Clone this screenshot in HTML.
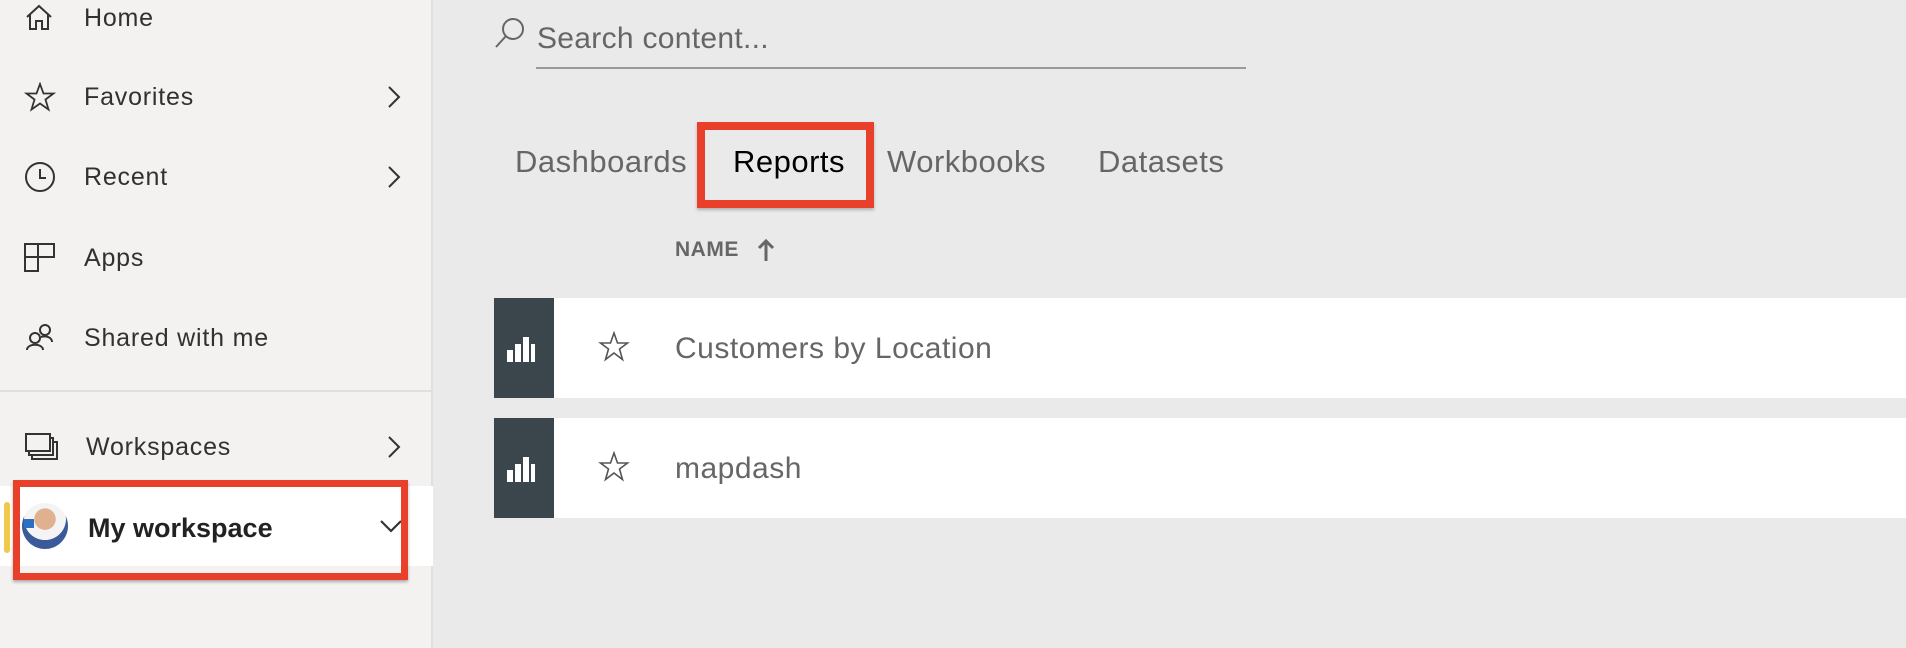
<!DOCTYPE html>
<html><head><meta charset="utf-8"><style>
*{margin:0;padding:0;box-sizing:border-box}
body{width:1906px;height:648px;overflow:hidden;background:#eaeaea;font-family:"Liberation Sans",sans-serif;position:relative}
.side{position:absolute;left:0;top:0;width:433px;height:648px;background:#f3f2f1;border-right:2px solid #e1dfdd}
.it{position:absolute;left:0;width:433px;height:40px;display:flex;align-items:center}
.it svg.ic{position:absolute;left:24px}
.it span{position:absolute;left:84px;top:6px;font-size:25px;color:#323130;letter-spacing:0.8px}
.chev{position:absolute;left:386px}
.sep{position:absolute;left:0;top:390px;width:433px;height:2px;background:#e1dfdd}
.ab{position:absolute}
.tab{position:absolute;top:144px;font-size:31px;color:#666;letter-spacing:0.5px}
.row{position:absolute;left:494px;width:1412px;height:100px;background:#fff}
.row .box{position:absolute;left:0;top:0;width:60px;height:100px;background:#3b464c}
.row .nm{position:absolute;left:181px;top:34px;font-size:30px;color:#666;letter-spacing:0.5px}
.row .st{position:absolute;left:104px;top:33px}
</style></head><body>
<div class="side">
 <div class="it" style="top:-2px"><svg class="ic" width="30" height="28" viewBox="0 0 30 28" fill="none" stroke="#333" stroke-width="2"><path d="M3 13 L15 2 L27 13 M6 10 V25 H12 V17 H18 V25 H24 V10"/></svg><span>Home</span></div>
 <div class="it" style="top:77px"><svg class="ic" width="32" height="30" viewBox="0 0 32 30" fill="none" stroke="#333" stroke-width="1.8"><path d="M16 2 L19.5 11.5 L29.5 11.5 L21.5 17.5 L24.5 27.5 L16 21.5 L7.5 27.5 L10.5 17.5 L2.5 11.5 L12.5 11.5 Z"/></svg><span>Favorites</span><svg class="chev" width="16" height="26" viewBox="0 0 16 26" fill="none" stroke="#333" stroke-width="2"><path d="M3 3 L13 13 L3 23"/></svg></div>
 <div class="it" style="top:157px"><svg class="ic" width="32" height="32" viewBox="0 0 32 32" fill="none" stroke="#333" stroke-width="2"><circle cx="16" cy="16" r="14"/><path d="M16 8 V17 H22"/></svg><span>Recent</span><svg class="chev" width="16" height="26" viewBox="0 0 16 26" fill="none" stroke="#333" stroke-width="2"><path d="M3 3 L13 13 L3 23"/></svg></div>
 <div class="it" style="top:238px"><svg class="ic" width="32" height="30" viewBox="0 0 32 30" fill="none" stroke="#333" stroke-width="2"><path d="M1 1 H14 V28 H1 Z M1 14 H14 M14 1 H30 V14 H14"/></svg><span>Apps</span></div>
 <div class="it" style="top:318px"><svg class="ic" width="30" height="30" viewBox="0 0 30 30" fill="none" stroke="#333" stroke-width="2"><circle cx="11" cy="15" r="5"/><path d="M3 27 C3 20 19 20 19 27"/><circle cx="21" cy="7" r="5"/><path d="M17 14 C23 12 28 15 28 19"/></svg><span>Shared with me</span></div>
 <div class="sep"></div>
 <div class="it" style="top:427px"><svg class="ic" width="34" height="30" viewBox="0 0 34 30" fill="none" stroke="#333" stroke-width="2"><path d="M2 2 H26 V19 H2 Z M5 19 V23 H29 V6 H26 M8 23 V27 H33 V10 H29"/></svg><span style="left:86px">Workspaces</span><svg class="chev" width="16" height="26" viewBox="0 0 16 26" fill="none" stroke="#333" stroke-width="2"><path d="M3 3 L13 13 L3 23"/></svg></div>
</div>
<div class="ab" style="left:0;top:486px;width:433px;height:80px;background:#fff"></div>
<div class="ab" style="left:4px;top:502px;width:6px;height:51px;background:#f0c94a;border-radius:3px"></div>
<div class="ab" style="left:22px;top:503px;width:46px;height:46px;border-radius:50%;background:radial-gradient(circle at 50% 35%,#e0b08f 0 28%,#f4f4f4 29% 55%,#3a5a9a 56%);overflow:hidden"></div>
<div class="ab" style="left:24px;top:519px;width:10px;height:9px;background:#2f6fc2"></div>
<div class="ab" style="left:88px;top:513px;font-size:27px;font-weight:bold;color:#222">My workspace</div>
<svg class="ab" style="left:378px;top:518px" width="26" height="16" viewBox="0 0 26 16" fill="none" stroke="#333" stroke-width="2.2"><path d="M3 3 L13 13 L23 3"/></svg>
<div class="ab" style="left:13px;top:480px;width:395px;height:100px;border:7px solid #e8402a;box-shadow:0 2px 3px rgba(0,0,0,.3)"></div>

<svg class="ab" style="left:493px;top:16px" width="34" height="34" viewBox="0 0 34 34" fill="none" stroke="#666" stroke-width="2"><circle cx="20" cy="13" r="10"/><path d="M13 20 L3 31"/></svg>
<div class="ab" style="left:537px;top:22px;font-size:30px;color:#666;letter-spacing:0.3px">Search content...</div>
<div class="ab" style="left:536px;top:67px;width:710px;height:2px;background:#999"></div>

<div class="tab" style="left:515px">Dashboards</div>
<div class="tab" style="left:733px;color:#000">Reports</div>
<div class="tab" style="left:887px">Workbooks</div>
<div class="tab" style="left:1098px">Datasets</div>
<div class="ab" style="left:697px;top:122px;width:177px;height:86px;border:8px solid #e8402a;box-shadow:0 2px 3px rgba(0,0,0,.25)"></div>

<div class="ab" style="left:675px;top:238px;font-size:21px;font-weight:bold;color:#666;letter-spacing:0.5px">NAME</div>
<svg class="ab" style="left:756px;top:237px" width="20" height="26" viewBox="0 0 20 26" fill="none" stroke="#666" stroke-width="3"><path d="M10 24 V4 M3 11 L10 4 L17 11"/></svg>

<div class="row" style="top:298px"><div class="box"><svg style="position:absolute;left:12px;top:37px" width="30" height="27"><rect x="1" y="15" width="6" height="12" fill="#fff"/><rect x="9" y="9" width="6" height="18" fill="#fff"/><rect x="17" y="2" width="6" height="25" fill="#fff"/><rect x="25" y="9" width="4" height="18" fill="#fff"/></svg></div>
<svg class="st" width="32" height="32" viewBox="0 0 32 32" fill="none" stroke="#555" stroke-width="1.6"><path d="M16 2 L19.5 12 L29.5 12 L21.5 18 L24.5 28.5 L16 22 L7.5 28.5 L10.5 18 L2.5 12 L12.5 12 Z"/></svg>
<div class="nm">Customers by Location</div></div>
<div class="row" style="top:418px"><div class="box"><svg style="position:absolute;left:12px;top:37px" width="30" height="27"><rect x="1" y="15" width="6" height="12" fill="#fff"/><rect x="9" y="9" width="6" height="18" fill="#fff"/><rect x="17" y="2" width="6" height="25" fill="#fff"/><rect x="25" y="9" width="4" height="18" fill="#fff"/></svg></div>
<svg class="st" width="32" height="32" viewBox="0 0 32 32" fill="none" stroke="#555" stroke-width="1.6"><path d="M16 2 L19.5 12 L29.5 12 L21.5 18 L24.5 28.5 L16 22 L7.5 28.5 L10.5 18 L2.5 12 L12.5 12 Z"/></svg>
<div class="nm">mapdash</div></div>
</body></html>
